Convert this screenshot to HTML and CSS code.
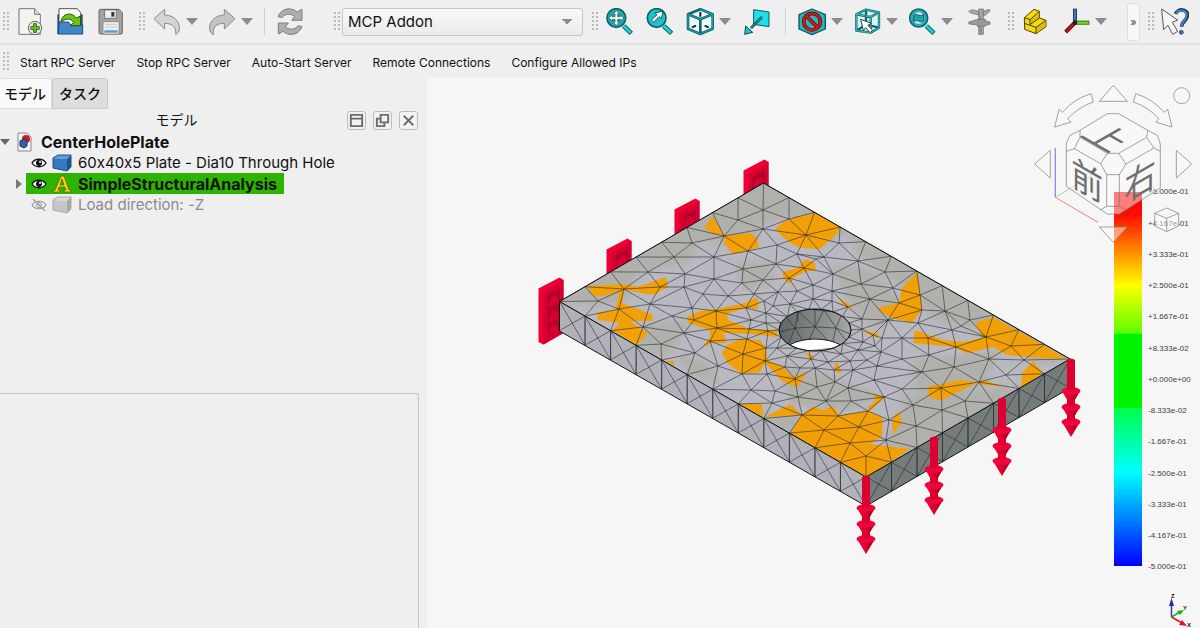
FILE: index.html
```html
<!DOCTYPE html>
<html lang="ja">
<head>
<meta charset="utf-8">
<title>CenterHolePlate</title>
<link rel="stylesheet" href="styles.css">
</head>
<body>
<header class="toolbar">
  <span class="handle"></span>
  <button class="tool" aria-label="New"><svg viewBox="51 24 84 84"><path d="M60 26H107L124 43V103H60Z" fill="#f3f3f0" stroke="#777" stroke-width="3"/><path d="M107 26V43H124" fill="#ddd" stroke="#777" stroke-width="3"/><circle cx="108" cy="84" r="20" fill="#e4ebdf" stroke="#666" stroke-width="3"/><path d="M108 70V98M94 84H122" stroke="#2c5d06" stroke-width="11"/><path d="M108 72V96M96 84H120" stroke="#68b820" stroke-width="6"/></svg></button>
  <button class="tool" aria-label="Open"><svg viewBox="168 24 84 84"><path d="M172 43H248V102H172Z" fill="#1f4f86"/><path d="M177 26H232L242 38V78H177Z" fill="#fff" stroke="#555" stroke-width="3"/><path d="M174 102L178 66H205L212 74H248V102Z" fill="#3f87c7" stroke="#1c4a80" stroke-width="3"/><path d="M183 66C186 40 215 34 229 54L242 48V77H212L221 67C212 54 198 54 183 66Z" fill="#6cc417" stroke="#234f08" stroke-width="3"/></svg></button>
  <button class="tool" aria-label="Save"><svg viewBox="289 24 84 84"><path d="M302 28H358L368 38V98Q368 102 364 102H302Q298 102 298 98V32Q298 28 302 28Z" fill="#a2a3a1" stroke="#666" stroke-width="3"/><path d="M315 30H350V55H315Z" fill="#f1f1f1" stroke="#555" stroke-width="2"/><path d="M335 36H344V50H335Z" fill="#333"/><path d="M310 65H358V102H310Z" fill="#eee" stroke="#777" stroke-width="2"/><path d="M314 91H354V98H314Z" fill="#5b97d2"/><path d="M316 73H352M316 81H352" stroke="#bbb" stroke-width="2"/></svg></button>
  <span class="handle"></span>
  <span class="split"><button class="tool" aria-label="Undo"><svg viewBox="459 24 84 84"><path d="M462 56L494 28V45C526 45 545 72 536 96L527 104C530 84 520 70 494 70V87Z" fill="#d5d5d5" stroke="#8a8a8a" stroke-width="3"/></svg></button><button class="drop" aria-label="Undo list"></button></span>
  <span class="split"><button class="tool" aria-label="Redo"><svg viewBox="622 24 84 84"><path d="M703 56L671 28V45C639 45 620 72 629 96L638 104C635 84 645 70 671 70V87Z" fill="#c4c4c4" stroke="#8a8a8a" stroke-width="3"/></svg></button><button class="drop" aria-label="Redo list"></button></span>
  <span class="rule"></span>
  <button class="tool" aria-label="Refresh"><svg viewBox="830 24 84 84"><g fill="#adadad" stroke="#808080" stroke-width="3"><path d="M836 50C846 24 876 20 893 36L908 28V61H877L886 49C873 39 856 41 848 53Z"/><path d="M908 80C898 106 868 110 851 94L837 102V69H867L858 81C871 91 888 89 896 77Z"/></g></svg></button>
  <span class="handle after-gap"></span>
  <select class="workbench" aria-label="Workbench"><option>MCP Addon</option></select>
  <span class="handle"></span>
  <button class="tool" aria-label="Fit all"><svg viewBox="45 24 84 84"><path d="M101 78L124 100" stroke="#0b5f66" stroke-width="14"/><path d="M101 78L122 98" stroke="#18d5dc" stroke-width="8"/><circle cx="79" cy="54" r="28" fill="#22aab0" stroke="#0d626b" stroke-width="5"/><path d="M79 31L88 42H83V50H91V45L102 54L91 63V58H83V66H88L79 77L70 66H75V58H67V63L56 54L67 45V50H75V42H70Z" fill="#f5f5ee" stroke="#175058" stroke-width="2"/></svg></button>
  <button class="tool" aria-label="Fit selection"><svg viewBox="165 24 84 84"><path d="M221 78L245 100" stroke="#0b5f66" stroke-width="14"/><path d="M221 78L243 98" stroke="#18d5dc" stroke-width="8"/><circle cx="200" cy="54" r="28" fill="#20c3ca" stroke="#0d626b" stroke-width="5"/><path d="M219 34L214 56L207 50L191 67L184 60L201 44L195 38Z" fill="#fff" stroke="#155" stroke-width="3"/></svg></button>
  <span class="split"><button class="tool" aria-label="Isometric view"><svg viewBox="288 24 84 84"><path d="M331 28L368 43V86L331 102L294 86V43Z" fill="#eefafa" stroke="#0d6870" stroke-width="8"/><path d="M294 43L331 58L368 43M331 58V102" fill="none" stroke="#0d6870" stroke-width="8"/><path d="M331 28L368 43V86L331 102L294 86V43L331 58L368 43" fill="none" stroke="#1fa5ac" stroke-width="3"/><path d="M331 36V50M306 82L318 77M356 82L344 77" stroke="#123" stroke-width="6"/></svg></button><button class="drop" aria-label="Standard views"></button></span>
  <button class="tool" aria-label="Align to face"><svg viewBox="459 24 84 84"><path d="M491 29L537 36V80L491 73Z" fill="#20dfe6" stroke="#0c5a62" stroke-width="3"/><path d="M516 51L483 84" stroke="#0c4a52" stroke-width="8"/><path d="M516 51L481 86" stroke="#1cb0b6" stroke-width="3"/><path d="M467 78L488 97L464 103Z" fill="#1fc6cc" stroke="#0c4a52" stroke-width="3"/></svg></button>
  <span class="rule"></span>
  <span class="split"><button class="tool" aria-label="Draw style"><svg viewBox="621 24 84 84"><path d="M663 27L703 44V87L663 104L624 87V44Z" fill="#25b7bd" stroke="#0d5860" stroke-width="4"/><circle cx="663" cy="65" r="25" fill="none" stroke="#4b0808" stroke-width="11"/><path d="M646 48L680 82" stroke="#4b0808" stroke-width="11"/><circle cx="663" cy="65" r="25" fill="none" stroke="#d8161c" stroke-width="7"/><path d="M646 48L680 82" stroke="#d8161c" stroke-width="7"/></svg></button><button class="drop" aria-label="Draw styles"></button></span>
  <span class="split"><button class="tool" aria-label="Selection view"><svg viewBox="789 24 84 84"><path d="M799 43L828 29L867 37V83L842 98L799 92Z" fill="#d8f2f2"/><path d="M799 43L828 29L867 37L842 51ZM799 43V92L842 98V51M842 98L867 83V37M828 29V74L799 92M828 74L867 83" fill="none" stroke="#0f6870" stroke-width="7"/><path d="M799 43L828 29L867 37L842 51ZM799 43V92L842 98V51M842 98L867 83V37" fill="none" stroke="#45bbc0" stroke-width="3"/><path d="M812 58L844 70L834 76L848 91L840 98L827 83L820 92Z" fill="#fff" stroke="#1b4448" stroke-width="3"/></svg></button><button class="drop" aria-label="Selection options"></button></span>
  <span class="split"><button class="tool" aria-label="Zoom style"><svg viewBox="27 24 84 84"><path d="M82 78L105 100" stroke="#0b5f66" stroke-width="14"/><path d="M82 78L103 98" stroke="#18d5dc" stroke-width="8"/><circle cx="59" cy="54" r="27" fill="#2ab4ba" stroke="#0d626b" stroke-width="5"/><circle cx="59" cy="54" r="19" fill="#bff0f0" stroke="#18848c" stroke-width="2"/><path d="M44 46C52 36 60 54 74 43V63C63 72 55 55 44 65Z" fill="#1aa6ad" stroke="#0d626b" stroke-width="3"/></svg></button><button class="drop" aria-label="Zoom options"></button></span>
  <button class="tool" aria-label="Measure"><svg viewBox="195 24 84 84"><path d="M236 27H250V103H236Z" fill="#a8a8a8" stroke="#666" stroke-width="2"/><path d="M206 34L216 29L236 34V45L212 39ZM250 34L268 28L270 33L254 47H250Z" fill="#a8a8a8" stroke="#666" stroke-width="2"/><path d="M206 66L234 58H256V63L270 66V73L256 76V79H232V75L207 72Z" fill="#999" stroke="#666" stroke-width="2"/><path d="M243 84V101M238 49H243M238 54H243M238 84H243M238 92H243" stroke="#666" stroke-width="2"/></svg></button>
  <span class="handle"></span>
  <button class="tool" aria-label="Part"><svg viewBox="363 24 84 84"><path d="M373 53L402 28L418 34V54L438 61V80L408 101L374 88Z" fill="#f6d90f" stroke="#4c4100" stroke-width="3"/><path d="M391 60L417 38V53L391 73ZM409 83L437 63V79L409 99Z" fill="#d9bd0a"/><path d="M373 53L390 59L418 34M390 59V74L418 54M373 70L408 82L438 61M408 82V101" fill="none" stroke="#4c4100" stroke-width="3"/></svg></button>
  <span class="split"><button class="tool" aria-label="Coordinate system"><svg viewBox="486 24 84 84"><path d="M525 66V26" stroke="#163a66" stroke-width="12"/><path d="M525 64V28" stroke="#3a76b8" stroke-width="7"/><path d="M525 68H568" stroke="#2a5a08" stroke-width="12"/><path d="M528 68H566" stroke="#7bd71c" stroke-width="7"/><path d="M525 68L497 96" stroke="#4a0505" stroke-width="12"/><path d="M523 70L499 94" stroke="#cc1116" stroke-width="7"/><circle cx="525" cy="68" r="7" fill="#222"/></svg></button><button class="drop" aria-label="Coordinate options"></button></span>
  <button class="more" aria-label="More tools">»</button>
  <span class="handle tight"></span>
  <button class="tool" aria-label="What's this?"><svg viewBox="786 24 84 84"><path d="M830 42C835 24 869 26 865 48C862 64 848 64 848 80" fill="none" stroke="#17365e" stroke-width="11"/><path d="M831 41C837 26 866 29 863 48C860 63 848 64 848 79" fill="none" stroke="#4a80ba" stroke-width="6"/><circle cx="847" cy="97" r="6" fill="#3c74b0" stroke="#17365e" stroke-width="2"/><path d="M788 27L836 60L820 67L836 94L821 103L807 76L794 89Z" fill="#f6f6f6" stroke="#555" stroke-width="3"/></svg></button>
</header>
<nav class="commands">
  <span class="handle"></span>
  <button>Start RPC Server</button>
  <button>Stop RPC Server</button>
  <button>Auto-Start Server</button>
  <button>Remote Connections</button>
  <button>Configure Allowed IPs</button>
</nav>
<main class="workspace">
  <aside class="dock">
    <div class="tabs" role="tablist">
      <button class="tab active" role="tab" aria-selected="true">モデル</button>
      <button class="tab" role="tab" aria-selected="false">タスク</button>
    </div>
    <div class="dock-title">
      <h2>モデル</h2>
      <div class="dock-actions">
        <button aria-label="Collapse"><svg viewBox="0 0 18 18"><path d="M3 3H15V15H3ZM3 7H15"/></svg></button>
        <button aria-label="Float"><svg viewBox="0 0 18 18"><path d="M7 3H15V11H7ZM7 7H3V15H11V11"/></svg></button>
        <button aria-label="Close"><svg viewBox="0 0 18 18"><path d="M4 4L14 14M14 4L4 14"/></svg></button>
      </div>
    </div>
    <ul class="tree">
      <li class="row root">
        <span class="twist open"></span>
        <svg class="doc-icon" viewBox="0 0 16 20"><path d="M2 1H11L15 5V19H2Z" fill="#f4f4f4" stroke="#888"/><circle cx="10" cy="7" r="4" fill="#d01820"/><path d="M4 9L8 7L11 9V14L8 16L4 14Z" fill="#2d66a8" stroke="#16365e"/></svg>
        <span class="label">CenterHolePlate</span>
      </li>
      <li class="row">
        <span class="twist"></span>
        <span class="item"><svg class="eye" viewBox="0 0 16 12"><path d="M1 6C4 1 12 1 15 6C12 11 4 11 1 6Z" fill="#fff" stroke="#111" stroke-width="1.3"/><circle cx="8" cy="6" r="3" fill="#111"/><circle cx="9" cy="5" r="1" fill="#fff"/></svg><svg class="kind" viewBox="0 0 20 18"><path d="M1 4L6 1H19L15 5Z" fill="#5c9bd8"/><path d="M1 4L15 5V17L1 14Z" fill="#3479bf"/><path d="M15 5L19 1V13L15 17Z" fill="#1c5490"/><path d="M1 4L6 1H19V13L15 17L1 14Z" fill="none" stroke="#244f7c"/></svg><span class="label">60x40x5 Plate - Dia10 Through Hole</span></span>
      </li>
      <li class="row">
        <span class="twist closed"></span>
        <span class="item selected"><svg class="eye" viewBox="0 0 16 12"><path d="M1 6C4 1 12 1 15 6C12 11 4 11 1 6Z" fill="#fff" stroke="#111" stroke-width="1.3"/><circle cx="8" cy="6" r="3" fill="#111"/><circle cx="9" cy="5" r="1" fill="#fff"/></svg><svg class="kind" viewBox="0 0 20 18"><path d="M1 17V15H3L9 1H12L17 15H19V17H12V15H14L13 12H7L6 15H8V17ZM8 10H12L10 4Z" fill="#f2dc10" stroke="#6f5c00" stroke-width=".8" fill-rule="evenodd"/></svg><span class="label">SimpleStructuralAnalysis</span></span>
      </li>
      <li class="row hidden-item">
        <span class="twist"></span>
        <span class="item"><svg class="eye" viewBox="0 0 16 12"><path d="M1 6C4 1 12 1 15 6C12 11 4 11 1 6ZM2 0L14 12" fill="none" stroke="#999" stroke-width="1.2"/><circle cx="8" cy="6" r="2.500" fill="none" stroke="#999"/></svg><svg class="kind" viewBox="0 0 20 18"><path d="M1 4L6 1H19L15 5Z" fill="#d9d9d9"/><path d="M1 4L15 5V17L1 14Z" fill="#c6c6c6"/><path d="M15 5L19 1V13L15 17Z" fill="#a8a8a8"/><path d="M1 4L6 1H19V13L15 17L1 14Z" fill="none" stroke="#aaa"/></svg><span class="label">Load direction: -Z</span></span>
      </li>
    </ul>
    <div class="properties"></div>
  </aside>
  <section class="view" aria-label="3D view">
    <svg class="scene" viewBox="427 78 773 550" preserveAspectRatio="xMaxYMid meet">
      <defs>
        <linearGradient id="scale" x1="0" y1="0" x2="0" y2="1">
          <stop offset="0" stop-color="#f00"/><stop offset=".06" stop-color="#ff0c00"/><stop offset=".25" stop-color="#ff0"/><stop offset=".378" stop-color="#5cff00"/><stop offset=".379" stop-color="#00f400"/><stop offset=".577" stop-color="#00f400"/><stop offset=".578" stop-color="#00ff48"/><stop offset=".75" stop-color="#0ff"/><stop offset="1" stop-color="#00f"/>
        </linearGradient>
        <linearGradient id="wall" x1="0" x2="1"><stop offset="0" stop-color="#5f6766"/><stop offset=".45" stop-color="#7d8482"/><stop offset="1" stop-color="#a6a8a9"/></linearGradient>
        <linearGradient id="cone" x1="0" x2="1"><stop offset="0" stop-color="#f4083a"/><stop offset=".45" stop-color="#e00030"/><stop offset="1" stop-color="#8c0020"/></linearGradient>
        <clipPath id="face"><path d="M559.500 301.500L763.500 183L1070 359L866 477Z"/></clipPath>
        <clipPath id="bore"><ellipse cx="815" cy="330" rx="36" ry="21"/></clipPath>
        <filter id="soft" x="-20%" y="-20%" width="140%" height="140%"><feGaussianBlur stdDeviation="3"/></filter>
        <g id="support">
          <path d="M538.500 288.500L559.500 277.500L563.500 280V333L543.500 344.500L538.500 342Z" fill="#ee0036"/>
          <path d="M543.500 291.500L563.500 280V333L543.500 344.500Z" fill="#d60030"/>
          <path d="M547.500 295L560 288V330L547.500 337Z" fill="#b3002a"/>
          <path d="M549 303Q553 290 558 298L559 303L549 308ZM549 318Q553 305 558 313L559 318L549 323ZM549 332Q553 320 558 328L559 330L549 335Z" fill="#d90031"/>
        </g>
        <g id="load">
          <path d="M-4 0Q0 -3 4 0V32H-4Z" fill="#e00030"/>
          <path d="M-9 31L0 47L9 31ZM-9 47L0 62L9 47ZM-9 62L0 77L9 62Z" fill="url(#cone)"/>
          <ellipse cy="31" rx="9.500" ry="4" fill="#f0053a"/><ellipse cy="47" rx="9.500" ry="4" fill="#f0053a"/><ellipse cy="62" rx="9.500" ry="4" fill="#f0053a"/>
          <path d="M-4 0V30H4V0ZM-4 40V46H4V40ZM-4 55V61H4V55Z" fill="#dc0030"/>
        </g>
      </defs>

      <use href="#support"/><use href="#support" x="68" y="-39"/><use href="#support" x="136" y="-79"/><use href="#support" x="205" y="-118"/>

      <path d="M559.500 301.500L866 477V506L559.500 331Z" fill="#b1b1ba"/>
      <path d="M866 477L1070 359V388L866 506Z" fill="#757c7c"/>
      <path d="M559.500 301.500L763.500 183L1070 359L866 477Z" fill="#b9b9c2"/>
      <g clip-path="url(#face)">
        <g fill="#b0b1ac" filter="url(#soft)">
          <path d="M556 302L763 180L850 228L830 245L790 215L762 226L745 252L700 240L690 262L640 272L625 300L595 306Z"/>
          <path d="M850 228L1072 359L1040 365L985 330L940 322L905 290L880 272L855 250Z"/>
          <path d="M735 262L775 262L770 285L742 290Z"/><path d="M830 265L870 270L900 300L880 330L855 315Z"/>
          <path d="M640 325L690 320L685 335L660 362L640 345Z"/><path d="M675 355L705 360L720 385L690 375Z"/>
          <path d="M780 365L830 375L880 395L850 410L790 405Z"/><path d="M910 360L960 355L1000 350L985 385L920 400Z"/>
          <path d="M905 395L980 390L1030 385L866 480L890 430Z"/><path d="M740 410L800 415L800 440Z"/>
        </g>
        <g fill="#f2a007">
          <path d="M713 216L724 236L712 233L704 228Z"/>
          <path d="M724 236L750 233L757 238L759 247L748 251L733 254L724 243Z"/>
          <path d="M814 213L840 227L838 233L820 249L803 248L793 245L783 237L775 229L782 223L793 218Z"/>
          <path d="M806 259L815 263L816 270L805 272L793 278L790 284L783 278L783 272L797 268Z"/>
          <path d="M587 286L624 284L637 287L666 277L668 287L653 295L624 290L622 303L653 315L652 321L630 321L648 333L637 345L612 330L620 323L598 320L597 313L615 310L620 292L595 297Z"/>
          <path d="M758 297V309L745 308L727 314L728 320L750 329L777 330V337L753 334L723 333L727 343L713 343L702 347L710 337V330L688 323L687 317L700 311L717 309L745 303Z"/>
          <path d="M740 339L760 340L766 348L767 360L783 367L792 377L807 373L797 387L783 382L765 363L760 372L742 374L727 363L722 353L727 345Z"/>
          <path d="M837 297L853 307L845 307ZM805 352L815 357L810 360ZM837 362L842 373L836 372L834 366ZM860 331L878 333V338Z"/>
          <path d="M917 272L921 297L922 310L912 323L892 318L883 313L877 308L899 303L902 288Z"/>
          <path d="M993 317L1018 331L1043 345L1067 359L1027 357L1007 355L993 347L967 353L953 347L913 343L915 330L943 340L963 342L983 338L975 323Z"/>
          <path d="M1033 361L1043 373L1021 388L1022 373ZM927 387L960 380L978 382L942 400L930 398ZM982 380L1007 387L978 384Z"/>
          <path d="M812 407L823 410L833 406L839 415L868 411L883 418L882 437L870 444L910 449L866 478L790 434L802 415Z"/>
          <path d="M738 404H762L763 417ZM765 417L790 404L802 415ZM872 393L885 397L870 411L867 408L876 400ZM899 412L902 422L893 434L892 420ZM665 361H674V365Z"/>
        </g>
      </g>
      <g>
        <ellipse cx="815" cy="330" rx="36" ry="21" fill="url(#wall)"/>
        <g clip-path="url(#bore)">
          <path d="M788 345L795 328L806 347L815 327L832 345L836 328L848 343M780 332L795 328L815 327L836 328L850 334M786 317L795 328L798 311L815 327L824 310L836 328L841 316M798 311V322M815 309V327" class="wire"/>
          <ellipse cx="815" cy="359" rx="36" ry="20" fill="#fff" stroke="#111"/>
        </g>
      </g>
      <path class="wire" id="mesh"/>
      <ellipse cx="815" cy="330" rx="36" ry="21" class="edge"/>
      <path d="M559.500 301.500L763.500 183L1070 359V388L866 506L559.500 331ZM559.500 301.500L866 477L1070 359M866 477V506" class="edge"/>

      <use href="#load" x="866" y="477"/><use href="#load" x="934" y="438"/><use href="#load" x="1002" y="399"/><use href="#load" x="1071" y="360"/>

      <rect x="1114" y="192" width="28" height="374" fill="url(#scale)"/>
      <g class="ticks">
        <text x="1148" y="194">+5.000e-01</text><text x="1148" y="226">+4.167e-01</text><text x="1148" y="257">+3.333e-01</text><text x="1148" y="288">+2.500e-01</text><text x="1148" y="319">+1.667e-01</text><text x="1148" y="351">+8.333e-02</text><text x="1148" y="382">+0.000e+00</text><text x="1148" y="413">-8.333e-02</text><text x="1148" y="444">-1.667e-01</text><text x="1148" y="476">-2.500e-01</text><text x="1148" y="507">-3.333e-01</text><text x="1148" y="538">-4.167e-01</text><text x="1148" y="569">-5.000e-01</text>
      </g>

      <svg x="1020" y="78" width="180" height="190" viewBox="0 0 540 570">
        <path d="M106 210V358" stroke="#8f8fe8" stroke-width="4"/><path d="M106 358L215 292" stroke="#8fdf9f" stroke-width="3"/><path d="M106 358L234 433" stroke="#ee7f84" stroke-width="3"/>
        <g class="cube">
          <path d="M262 107H296L383 157L412 172L421 198V330L298 408H262L139 325V195L150 172L180 157Z"/>
          <path d="M180 157V178L262 226H296L380 178L383 157M180 178L163 212L139 220M163 212L242 257L262 226M296 226L318 258L402 210L380 178M402 210L421 220M242 257L260 290H298L318 258M260 290V385H298V290M260 385L242 395M298 385L318 395" fill="none"/>
          <path d="M280 22L322 70H238ZM280 493L322 447H238ZM44 258L91 217V300ZM515 258L469 217V300Z"/>
          <path d="M213 47L220 72Q177 86 143 122L153 132L104 147L117 94L127 103Q163 62 213 47ZM347 47L340 72Q383 86 417 122L407 132L456 147L443 94L433 103Q397 62 347 47Z"/>
          <circle cx="485" cy="53" r="24"/>
          <path d="M440 390L476 406V444L440 461L404 444V406ZM404 406L440 421L476 406M440 421V461"/>
        </g>
        <g class="glyphs" text-anchor="middle">
          <text transform="matrix(.866 .5 -.866 .5 262 178)" y="42">上</text>
          <text transform="matrix(.866 .5 0 1 201 306)" y="42">前</text>
          <text transform="matrix(.866 -.5 0 1 360 306)" y="42">右</text>
        </g>
      </svg>

      <g class="axes">
        <path d="M1171.500 617V605" stroke="#3434c8" stroke-width="1.500"/><path d="M1171.500 598L1174 606H1169Z" fill="#2626b8"/>
        <path d="M1171.500 617L1180 612" stroke="#18b018" stroke-width="1.500"/><path d="M1184 610L1180 615L1177 611Z" fill="#18b018"/>
        <path d="M1171.500 617L1182 623" stroke="#d81828" stroke-width="1.500"/><path d="M1187 626L1179 625L1182 620Z" fill="#d81828"/>
        <text x="1171" y="598">Z</text><text x="1183" y="610">Y</text><text x="1187" y="627">X</text>
      </g>
    </svg>
  </section>
</main>
<script src="mesh.js"></script>
</body>
</html>
```
FILE: styles.css
```css
* { box-sizing: border-box; }
body {
  margin: 0;
  min-height: 100vh;
  display: flex;
  flex-direction: column;
  background: #efefef;
  color: #111;
  font-family: Inter, "Noto Sans CJK JP", sans-serif;
  font-size: 12px;
  font-feature-settings: "calt" 0;
  overflow: hidden;
}
button { border: 0; padding: 0; background: none; color: inherit; font: inherit; }

.toolbar {
  display: flex;
  align-items: center;
  height: 45px;
  padding-left: 3px;
  border-bottom: 2px solid #e1e2e3;
}
.toolbar > * { flex-shrink: 0; }
.handle {
  width: 6px;
  height: 20px;
  margin: 0 1px 0 9px;
  background: radial-gradient(circle at 1px 1px, #b9b9b9 1px, transparent 1px) 0 0 / 4px 4px;
}
.handle:first-child { margin-left: 0; }
.handle.after-gap { margin: 0 2px 0 24px; }
.handle.tight { margin-left: 8px; }
.tool { width: 40px; height: 36px; display: grid; place-items: center; }
.tool svg { width: 28px; height: 28px; display: block; }
.tool path, .tool circle { stroke-linejoin: round; }
.split { display: flex; align-items: center; margin-left: 3px; }
.split .tool { width: 36px; }
.split + .tool { margin-left: 3px; }
.drop { width: 14px; height: 36px; margin-right: 2px; display: grid; place-items: center; }
.drop::before {
  content: "";
  border: 6px solid transparent;
  border-top: 7px solid #8c8c8c;
  border-bottom: 0;
}
.rule { width: 1px; height: 27px; margin: 0 5px 0 8px; background: #cfcfcf; }
.workbench {
  width: 241px;
  height: 28px;
  padding: 0 5px;
  border: 1px solid #c6c6c6;
  border-radius: 3px;
  appearance: none;
  color: #111;
  font: 15px Inter, sans-serif;
  background:
    linear-gradient(to top left, transparent 50%, #8a8a8a 50%) right 10px center / 5px 5px no-repeat,
    linear-gradient(to top right, transparent 50%, #8a8a8a 50%) right 15px center / 5px 5px no-repeat,
    linear-gradient(#f8f8f8, #ebebeb);
}
.more {
  width: 13px;
  height: 38px;
  margin-left: 17px;
  border: 1px solid #dedede;
  border-radius: 3px;
  background: #f8f8f8;
  color: #444;
  font-size: 11px;
}

.commands { display: flex; align-items: center; gap: 21px; height: 34px; padding-left: 3px; }
.commands .handle { margin: 0 -10px 0 0; }
.commands button { white-space: nowrap; }

.workspace { flex: 1; display: flex; min-height: 0; margin-top: -1px; }
.dock { width: 427px; flex-shrink: 0; display: flex; flex-direction: column; }
.tabs { display: flex; height: 31px; }
.tab {
  padding: 0 6px;
  border: 1px solid #c9c9c9;
  border-radius: 3px 3px 0 0;
  background: #dedede;
  font-size: 14px;
  font-weight: 500;
  line-height: 20px;
}
.tab.active { padding: 0 5px 0 4px; border-color: #dcdcdc; border-left: 0; background: #fafafa; }
.dock-title { display: flex; align-items: center; height: 22px; padding-right: 9px; }
.dock-title h2 { flex: 1; margin: 0; padding-left: 6px; text-align: center; font-size: 14px; font-weight: 400; line-height: 20px; }
.dock-actions { display: flex; gap: 7px; }
.dock-actions button { width: 19px; height: 19px; border: 1px solid #bdbdbd; border-radius: 3px; background: #f3f3f3; }
.dock-actions svg { display: block; width: 17px; height: 17px; fill: none; stroke: #6c6c6c; stroke-width: 2; }

.tree { flex: 1; margin: 0; padding: 0; list-style: none; font-size: 15px; line-height: 20px; }
.row { display: flex; align-items: center; height: 21px; }
.row .twist { width: 26px; padding-left: 16px; }
.row.root .twist { width: 16px; padding-left: 0; }
.twist::before { content: ""; display: block; width: 0; border: 0 solid transparent; }
.twist.open::before { border-width: 6px 5px 0; border-top-color: #666; }
.twist.closed::before { border-width: 5px 0 5px 6px; border-left-color: #777; }
.root, .selected { font-size: 16px; font-weight: 700; }
.doc-icon { width: 16px; height: 20px; margin-right: 9px; }
.item { display: flex; align-items: center; height: 21px; padding: 0 7px 0 5px; }
.eye { width: 16px; height: 12px; margin-right: 5px; }
.kind { width: 20px; height: 18px; margin-right: 6px; }
.selected { background: #2db400; }
.hidden-item { color: #8c8c8c; }
.label { white-space: nowrap; }
.properties { height: 235px; width: 419px; border: 1px solid #c4c4c4; border-width: 1px 1px 0 0; border-radius: 0 3px 0 0; }

.view { flex: 1; min-width: 0; display: flex; background: #f6f6f6; }
.scene { width: 100%; height: 100%; display: block; }
.wire { fill: none; stroke: #222; stroke-width: .7; stroke-opacity: .8; }
.edge { fill: none; stroke: #141414; stroke-width: 1; }
.ticks { fill: #3c3c3c; font: 8px "Liberation Sans", sans-serif; }
.cube { fill: #fafafa; fill-opacity: .5; stroke: #777; stroke-width: 2; }
.glyphs { fill: #6f6f6f; font: 110px "Noto Sans CJK JP", sans-serif; }
.axes { fill: #111; font: bold 6px "Liberation Sans", sans-serif; }
```
FILE: mesh.js
```js
// Nodes on the top face, in view coordinates.
const inner = [
  763,210, 738,220, 724,236, 692,243, 763,229, 789,219, 748,251, 714,257, 674,257, 777,245, 776,264,
  743,269, 648,272, 685,274, 624,289, 660,287, 684,287, 714,279, 763,280, 742,283, 619,309, 598,301,
  650,304, 703,294, 728,296, 754,294, 778,292, 716,311, 746,308, 692,308, 643,327, 672,316, 684,333,
  717,328, 694,320, 661,344, 806,235, 797,254, 804,268, 789,278, 816,259, 833,274, 858,261, 861,284,
  797,291, 813,285, 832,291, 813,299, 790,304, 832,301, 848,307, 870,299, 773,306, 764,301,
  766,313, 751,320, 766,323, 749,329, 768,331, 710,341, 747,339, 766,348, 743,354,
  765,361, 695,353, 718,366, 742,374, 767,374, 795,379, 777,348, 787,356, 785,367, 811,359,
  815,368, 800,368, 828,362, 834,370, 835,382, 841,354, 853,370, 850,361, 858,350,
  863,342, 862,329, 873,335, 875,346, 862,319, 867,360, 839,243, 824,257, 885,272, 893,288,
  920,295, 899,303, 922,310, 888,320, 945,311, 970,320, 961,326, 918,323, 952,330, 928,338, 986,337,
  956,347, 929,355, 902,338, 882,338, 881,352, 877,366, 902,359, 874,380, 989,359, 1011,346, 1024,360,
  1006,375, 954,367, 922,372, 902,389, 979,382, 941,388, 848,388, 851,401, 884,397, 913,405, 868,411,
  942,410, 965,401, 889,420, 859,427, 916,426, 886,440, 850,443, 866,456, 751,390, 775,391, 772,403,
  798,397, 826,401, 817,387, 802,415, 838,416, 824,430
];
const L = [559.5, 301.5], B = [866, 477], T = [763.5, 183], R = [1070, 359];
const nodes = [];
for (let i = 0; i < inner.length; i += 2) nodes.push([inner[i], inner[i + 1]]);
const lerp = (a, b, t) => [a[0] + (b[0] - a[0]) * t, a[1] + (b[1] - a[1]) * t];
for (let i = 0; i < 12; i++) nodes.push(lerp(L, B, i / 12), lerp(T, R, i / 12));
for (let i = 1; i < 8; i++) nodes.push(lerp(L, T, i / 8), lerp(B, R, i / 8));
nodes.push(B, R);
for (let i = 0; i < 18; i++) {
  const a = i * Math.PI / 9;
  nodes.push([815 + 36 * Math.cos(a), 330 + 21 * Math.sin(a)]);
}

// Undo the isometric foreshortening so that the triangulation works in plate units.
const flat = nodes.map(p => [p[0], p[1] * 1.732]);
const n = flat.length;
flat.push([-9000, -9000], [9000, -9000], [800, 18000]);

function circle(t) {
  const [a, b, c] = t.map(i => flat[i]);
  const d = 2 * (a[0] * (b[1] - c[1]) + b[0] * (c[1] - a[1]) + c[0] * (a[1] - b[1]));
  const s = p => p[0] * p[0] + p[1] * p[1];
  const x = (s(a) * (b[1] - c[1]) + s(b) * (c[1] - a[1]) + s(c) * (a[1] - b[1])) / d;
  const y = (s(a) * (c[0] - b[0]) + s(b) * (a[0] - c[0]) + s(c) * (b[0] - a[0])) / d;
  return { t, x, y, r: (a[0] - x) ** 2 + (a[1] - y) ** 2 };
}

let tris = [circle([n, n + 1, n + 2])];
for (let i = 0; i < n; i++) {
  const edges = new Map();
  tris = tris.filter(k => {
    if ((flat[i][0] - k.x) ** 2 + (flat[i][1] - k.y) ** 2 >= k.r) return true;
    for (let e = 0; e < 3; e++) {
      const u = k.t[e], v = k.t[(e + 1) % 3], key = Math.min(u, v) + "-" + Math.max(u, v);
      if (edges.has(key)) edges.delete(key); else edges.set(key, [u, v]);
    }
    return false;
  });
  for (const [u, v] of edges.values()) tris.push(circle([u, v, i]));
}

let d = "";
const drawn = new Set();
for (const { t } of tris) {
  if (t.some(i => i >= n)) continue;
  const [a, b, c] = t.map(i => nodes[i]);
  const area = Math.abs((b[0] - a[0]) * (c[1] - a[1]) - (c[0] - a[0]) * (b[1] - a[1]));
  const x = (a[0] + b[0] + c[0]) / 3 - 815, y = (a[1] + b[1] + c[1]) / 3 - 330;
  if (area < 8 || (x / 35) ** 2 + (y / 20) ** 2 < 1) continue;
  for (let e = 0; e < 3; e++) {
    const u = t[e], v = t[(e + 1) % 3], key = Math.min(u, v) + "-" + Math.max(u, v);
    if (drawn.has(key)) continue;
    drawn.add(key);
    d += `M${nodes[u]}L${nodes[v]}`;
  }
}

// Crossed cells along the two visible side faces.
function side(p, q, count) {
  for (let i = 0; i < count; i++) {
    const a = lerp(p, q, i / count), b = lerp(p, q, (i + 1) / count);
    d += `M${a}V${a[1] + 29}L${b}V${b[1] + 29}L${a}`;
  }
}
side(L, B, 12);
side(B, R, 8);
document.getElementById("mesh").setAttribute("d", d);
```
